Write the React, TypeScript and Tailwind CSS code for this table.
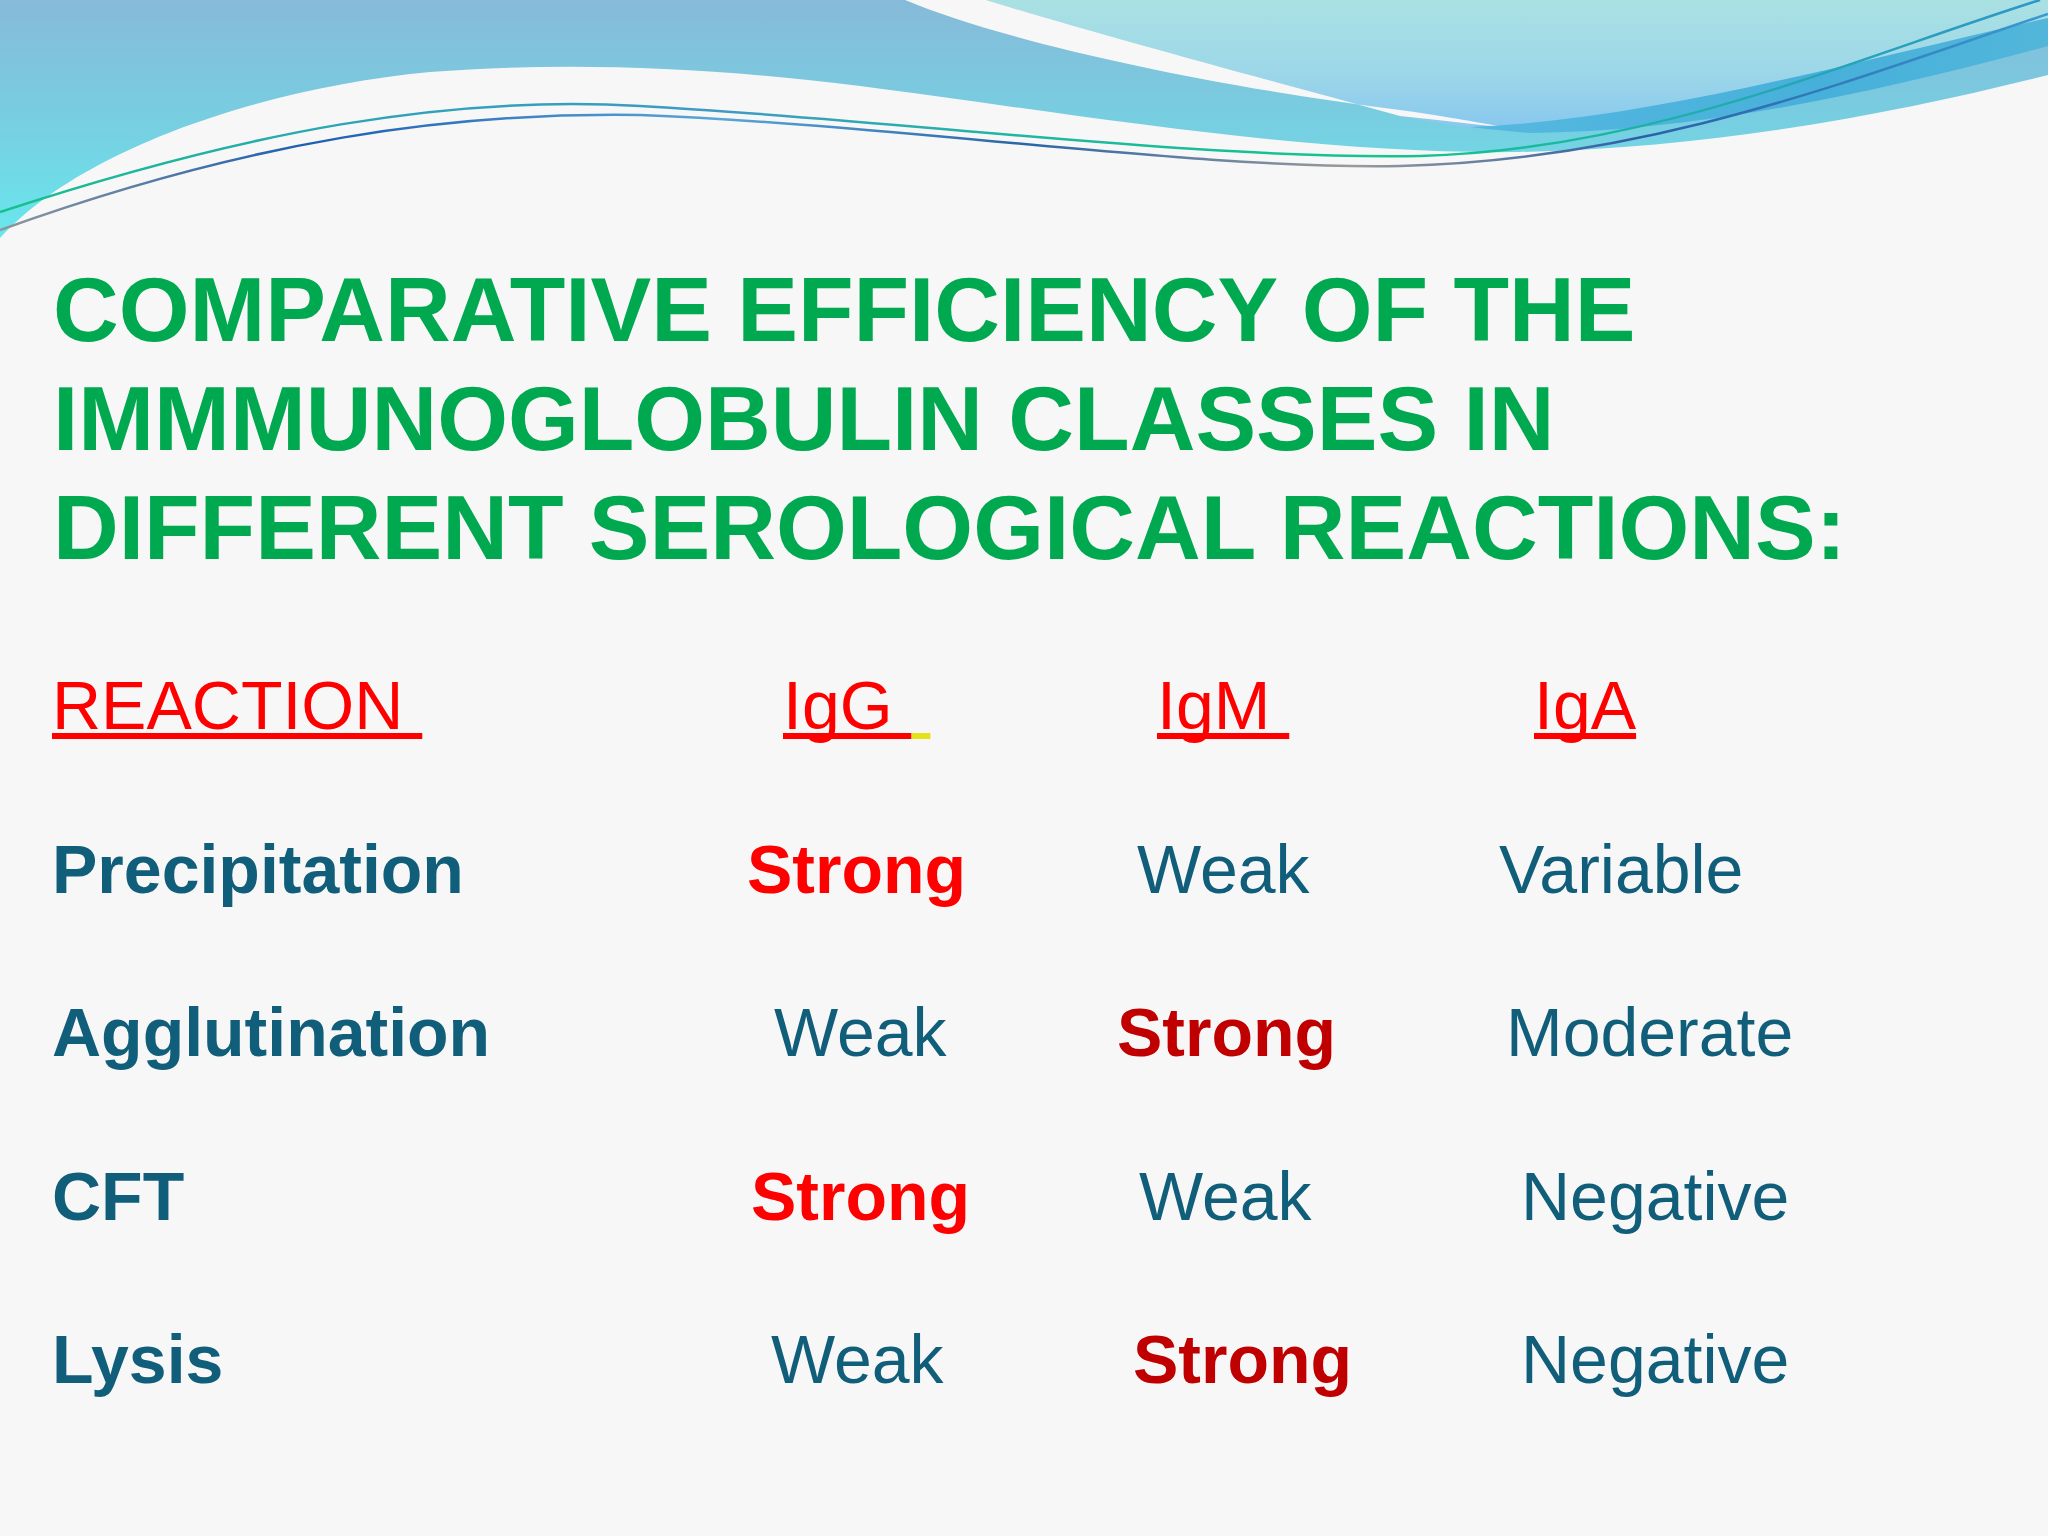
import React from 'react'

type Tone = 'bright' | 'deep' | 'plain'

interface Cell {
  text: string
  tone: Tone
  pad: string
}

const toneClass: Record<Tone, string> = {
  bright: 'font-bold text-[#ff0000]',
  deep: 'font-bold text-[#c00000]',
  plain: 'text-[#115e7a]',
}

const rows: { name: string; cells: Cell[] }[] = [
  {
    name: 'Precipitation',
    cells: [
      { text: 'Strong', tone: 'bright', pad: 'pl-0' },
      { text: 'Weak', tone: 'plain', pad: 'pl-[20px]' },
      { text: 'Variable', tone: 'plain', pad: 'pl-0' },
    ],
  },
  {
    name: 'Agglutination',
    cells: [
      { text: 'Weak', tone: 'plain', pad: 'pl-[27px]' },
      { text: 'Strong', tone: 'deep', pad: 'pl-0' },
      { text: 'Moderate', tone: 'plain', pad: 'pl-[7px]' },
    ],
  },
  {
    name: 'CFT',
    cells: [
      { text: 'Strong', tone: 'bright', pad: 'pl-[4px]' },
      { text: 'Weak', tone: 'plain', pad: 'pl-[22px]' },
      { text: 'Negative', tone: 'plain', pad: 'pl-[22px]' },
    ],
  },
  {
    name: 'Lysis',
    cells: [
      { text: 'Weak', tone: 'plain', pad: 'pl-[24px]' },
      { text: 'Strong', tone: 'deep', pad: 'pl-[16px]' },
      { text: 'Negative', tone: 'plain', pad: 'pl-[22px]' },
    ],
  },
]

// Decorative wave band across the top of the slide.
function WaveHeader() {
  return (
    <svg width="2048" height="240" viewBox="0 0 2048 240" className="block">
      <defs>
        <linearGradient id="band" x1="0" y1="0" x2="0" y2="240" gradientUnits="userSpaceOnUse">
          <stop offset="0" stopColor="#86bad8" />
          <stop offset="0.55" stopColor="#76d0e2" />
          <stop offset="1" stopColor="#68e8ee" />
        </linearGradient>
        <linearGradient id="sky" x1="0" y1="0" x2="0" y2="135" gradientUnits="userSpaceOnUse">
          <stop offset="0" stopColor="#a9e1e3" />
          <stop offset="0.5" stopColor="#9ed8e8" />
          <stop offset="1" stopColor="#86c6ef" />
        </linearGradient>
        <linearGradient id="streak" x1="1480" y1="0" x2="2048" y2="0" gradientUnits="userSpaceOnUse">
          <stop offset="0" stopColor="#55b8e0" />
          <stop offset="0.6" stopColor="#47b0da" />
          <stop offset="1" stopColor="#52b6da" />
        </linearGradient>
        <linearGradient id="lineA" x1="0" y1="0" x2="2048" y2="0" gradientUnits="userSpaceOnUse">
          <stop offset="0" stopColor="#14c28a" />
          <stop offset="0.18" stopColor="#2ea3b8" />
          <stop offset="0.35" stopColor="#3f9ac4" />
          <stop offset="0.5" stopColor="#1fb7a0" />
          <stop offset="0.68" stopColor="#12c58e" />
          <stop offset="0.85" stopColor="#22aab0" />
          <stop offset="1" stopColor="#2f96c8" />
        </linearGradient>
        <linearGradient id="lineB" x1="0" y1="0" x2="2048" y2="0" gradientUnits="userSpaceOnUse">
          <stop offset="0" stopColor="#8c979b" />
          <stop offset="0.15" stopColor="#1e5eb2" />
          <stop offset="0.35" stopColor="#5aa6d6" />
          <stop offset="0.5" stopColor="#2a66a8" />
          <stop offset="0.66" stopColor="#9a9a9a" />
          <stop offset="0.8" stopColor="#2b5fa8" />
          <stop offset="1" stopColor="#3a9ad0" />
        </linearGradient>
      </defs>

      <path
        d="M0,0 H2048 V75 C1900,112 1720,148 1520,152 C1300,155 1050,110 860,86 C700,66 560,62 430,72 C260,88 80,150 0,238 Z"
        fill="url(#band)"
      />
      <path
        d="M986,0 C1100,35 1250,75 1400,116 C1450,126 1490,130 1520,131 C1650,122 1850,62 2048,22 V0 Z"
        fill="url(#sky)"
      />
      <path
        d="M905,0 C1000,40 1200,85 1400,110 C1450,117 1480,123 1510,128 C1470,124 1440,120 1400,116 C1250,75 1100,35 986,0 Z"
        fill="#f7f7f7"
      />
      <path
        d="M1470,127 C1650,120 1850,62 2048,18 V46 C1850,100 1680,132 1530,133 C1505,131 1488,129 1470,127 Z"
        fill="url(#streak)"
      />

      <path
        d="M0,212 C250,130 450,95 640,106 C900,120 1200,160 1420,156 C1650,150 1850,60 2040,0"
        fill="none"
        stroke="url(#lineA)"
        strokeWidth="2.5"
      />
      <path
        d="M0,230 C250,140 450,112 640,115 C900,125 1200,170 1400,166 C1650,160 1850,80 2048,14"
        fill="none"
        stroke="url(#lineB)"
        strokeWidth="2.5"
      />
    </svg>
  )
}

export default function App() {
  return (
    <div className="w-[2048px] h-[1536px] overflow-hidden bg-[#f7f7f7] font-['Liberation_Sans',Arial,sans-serif]">
      <WaveHeader />

      <h1 className="mt-[15px] pl-[53px] text-[91px] leading-[109px] font-bold text-[#00a94f]">
        <span className="block">COMPARATIVE EFFICIENCY OF THE</span>
        <span className="block">IMMMUNOGLOBULIN CLASSES IN</span>
        <span className="block">DIFFERENT SEROLOGICAL REACTIONS:</span>
      </h1>

      <div className="mt-[42px] pl-[52px] grid grid-cols-[695px_370px_382px_1fr] auto-rows-[163.5px] text-[68px] leading-[163.5px] whitespace-pre">
        {/* header row */}
        <div className="text-[#ff0000]">
          <span className="underline [text-decoration-skip-ink:none]">REACTION </span>
        </div>
        <div className="pl-[36px] text-[#ff0000]">
          <span className="underline [text-decoration-skip-ink:none]">IgG </span>
          <span className="underline decoration-[#e6e21a] [text-decoration-skip-ink:none]"> </span>
        </div>
        <div className="pl-[40px] text-[#ff0000]">
          <span className="underline [text-decoration-skip-ink:none]">IgM </span>
        </div>
        <div className="pl-[35px] text-[#ff0000]">
          <span className="underline [text-decoration-skip-ink:none]">IgA</span>
        </div>

        {rows.map(row => (
          <React.Fragment key={row.name}>
            <div className="font-bold text-[#115e7a]">{row.name}</div>
            {row.cells.map((cell, i) => (
              <div key={i} className={`${cell.pad} ${toneClass[cell.tone]}`}>
                {cell.text}
              </div>
            ))}
          </React.Fragment>
        ))}
      </div>
    </div>
  )
}
